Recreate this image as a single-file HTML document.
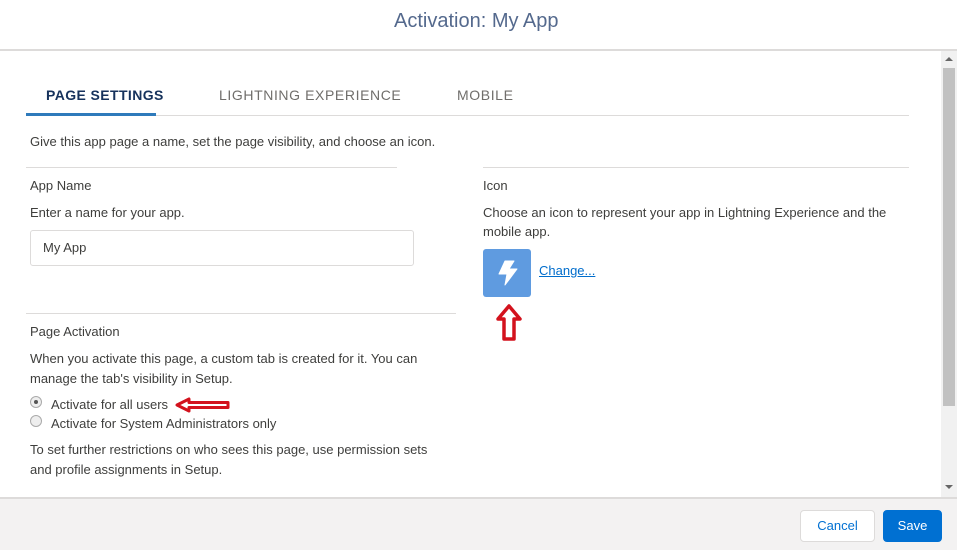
<!DOCTYPE html>
<html><head><style>
*{box-sizing:border-box;margin:0;padding:0}
body{width:957px;height:550px;overflow:hidden;background:#fff;font-family:"Liberation Sans",sans-serif;color:#3e3e3c;position:relative}
.hdr{position:absolute;left:0;top:0;width:957px;height:51px;border-bottom:2px solid #dddbda}
.hdr h1{font-weight:normal;font-size:20px;color:#54698d;line-height:42px;position:absolute;left:394px;top:0}
.sb{position:absolute;left:941px;top:51px;width:16px;height:446px;background:#f1f1f1}
.thumb{position:absolute;left:943px;top:68px;width:12px;height:338px;background:#c1c1c1}
.t{position:absolute;font-size:13px;white-space:nowrap}
.tab{position:absolute;top:87px;font-size:14px;letter-spacing:0.6px;color:#706e6b}
.line{position:absolute;height:1px;background:#dddbda}
.footer{position:absolute;left:0;top:497px;width:957px;height:53px;background:#f3f2f2;border-top:2px solid #dddbda}
.btn{position:absolute;top:510px;height:32px;border-radius:4px;font-size:13px;text-align:center;line-height:30px}
.radio{position:absolute;width:12px;height:12px;border-radius:50%;border:1px solid #aaa;background:#eee}
</style></head><body>
<div class="hdr"><h1>Activation: My App</h1></div>
<div class="sb"></div><div class="thumb"></div>
<div style="position:absolute;left:945px;top:57px;width:0;height:0;border-left:4px solid transparent;border-right:4px solid transparent;border-bottom:4px solid #666"></div>
<div style="position:absolute;left:945px;top:485px;width:0;height:0;border-left:4px solid transparent;border-right:4px solid transparent;border-top:4px solid #666"></div>
<div class="tab" style="left:46px;color:#16325c;font-weight:bold;letter-spacing:0.4px">PAGE SETTINGS</div>
<div class="tab" style="left:219px">LIGHTNING EXPERIENCE</div>
<div class="tab" style="left:457px">MOBILE</div>
<div class="line" style="left:26px;top:115px;width:883px"></div>
<div style="position:absolute;left:26px;top:113px;width:130px;height:3px;background:#2e7abb"></div>
<div class="t" style="left:30px;top:134px">Give this app page a name, set the page visibility, and choose an icon.</div>
<div class="line" style="left:26px;top:167px;width:371px"></div>
<div class="line" style="left:483px;top:167px;width:426px"></div>
<div class="t" style="left:30px;top:178px">App Name</div>
<div class="t" style="left:30px;top:205px">Enter a name for your app.</div>
<div style="position:absolute;left:30px;top:230px;width:384px;height:36px;border:1px solid #dddbda;border-radius:3px"></div>
<div class="t" style="left:43px;top:240px">My App</div>
<div class="t" style="left:483px;top:178px">Icon</div>
<div class="t" style="left:483px;top:205px">Choose an icon to represent your app in Lightning Experience and the</div>
<div class="t" style="left:483px;top:224px">mobile app.</div>
<div style="position:absolute;left:483px;top:249px;width:48px;height:48px;background:#5f9be0;border-radius:3px">
<svg width="48" height="48" viewBox="0 0 48 48"><path d="M22 12 L31 12 L26 20 L34 20 L22 36 L24 25 L16 25Z" fill="#fff" stroke="#fff" stroke-width="1" stroke-linejoin="round"/></svg></div>
<div class="t" style="left:539px;top:263px;color:#006dcc;text-decoration:underline">Change...</div>
<svg style="position:absolute;left:495px;top:303px" width="28" height="40" viewBox="0 0 28 40"><path d="M14 3 L25 16 L19 16 L19 36 L9 36 L9 16 L3 16Z" fill="#fff" stroke="#d3121d" stroke-width="3.5" stroke-linejoin="round"/></svg>
<div class="line" style="left:26px;top:313px;width:430px"></div>
<div class="t" style="left:30px;top:324px">Page Activation</div>
<div class="t" style="left:30px;top:351px">When you activate this page, a custom tab is created for it. You can</div>
<div class="t" style="left:30px;top:371px">manage the tab's visibility in Setup.</div>
<div class="radio" style="left:30px;top:396px"><div style="width:4px;height:4px;border-radius:50%;background:#555;margin:3px"></div></div>
<div class="t" style="left:51px;top:397px">Activate for all users</div>
<svg style="position:absolute;left:175px;top:397px" width="56" height="16" viewBox="0 0 56 16"><path d="M2 8 L14 2 L14 5.5 L53 5.5 L53 10.5 L14 10.5 L14 14Z" fill="#fff" stroke="#d3121d" stroke-width="3" stroke-linejoin="round"/></svg>
<div class="radio" style="left:30px;top:415px"></div>
<div class="t" style="left:51px;top:416px">Activate for System Administrators only</div>
<div class="t" style="left:30px;top:442px">To set further restrictions on who sees this page, use permission sets</div>
<div class="t" style="left:30px;top:462px">and profile assignments in Setup.</div>
<div class="footer"></div>
<div class="btn" style="left:800px;width:75px;background:#fff;border:1px solid #dddbda;color:#0070d2">Cancel</div>
<div class="btn" style="left:883px;width:59px;background:#0070d2;color:#fff;border:1px solid #0070d2">Save</div>
</body></html>
